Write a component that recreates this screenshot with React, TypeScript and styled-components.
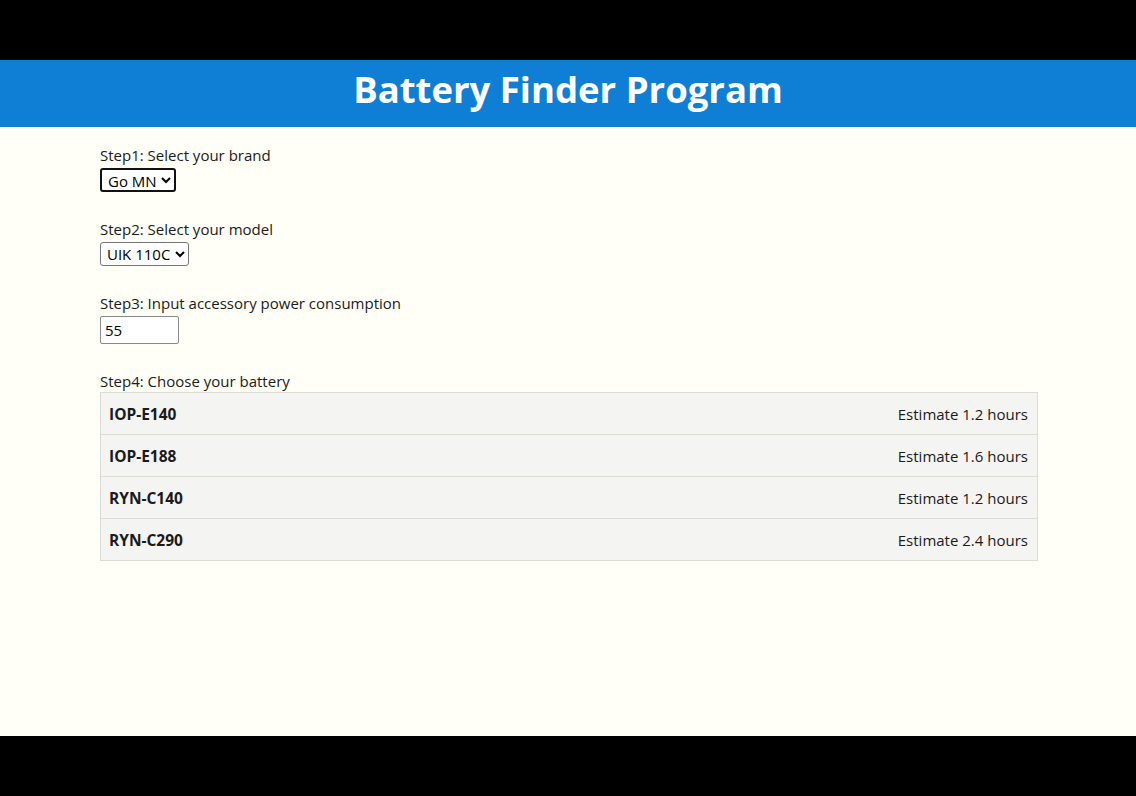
import React from "react";
import styled, { createGlobalStyle } from "styled-components";

const GlobalStyle = createGlobalStyle`
  body {
    margin: 0;
    background: #000;
    font-family: "Open Sans", "Noto Sans", sans-serif;
  }
`;

const Screen = styled.div`
  height: 796px;
  padding: 60px 0;
  box-sizing: border-box;
  background: #000;
`;

const Page = styled.div`
  height: 676px;
  background: #fffff7;
  color: #1a1a1a;
`;

const Header = styled.header`
  height: 67px;
  box-sizing: border-box;
  padding-bottom: 9px;
  background: #0f7fd6;
  display: flex;
  align-items: center;
  justify-content: center;
  color: #fff;
  font-size: 36.5px;
  font-weight: 700;
`;

const Main = styled.main`
  padding: 18px 98px 0 100px;
`;

const Step = styled.div`
  display: flex;
  flex-direction: column;
  align-items: flex-start;
  margin-bottom: 27px;
`;

const Label = styled.label<{ $tight?: boolean }>`
  display: block;
  font-size: 15px;
  line-height: 21px;
  margin-bottom: ${(p) => (p.$tight ? "0" : "2px")};
`;

const Select = styled.select<{ $focused?: boolean }>`
  height: 24px;
  font-family: inherit;
  font-size: 15px;
  color: #000;
  background: #fff;
  border-radius: 3px;
  padding: 0 1px 0 2px;
  border: ${(p) => (p.$focused ? "2px solid #111" : "1px solid #767676")};
`;

const NumberInput = styled.input`
  width: 79px;
  height: 28px;
  box-sizing: border-box;
  font-family: inherit;
  font-size: 15px;
  padding: 0 4px;
  border: 1px solid #8a8a8a;
  border-radius: 2px;
  background: #fff;
`;

const List = styled.div`
  border: 1px solid #dcdcd4;
  background: #f4f4f2;
`;

const Row = styled.div`
  display: flex;
  justify-content: space-between;
  align-items: center;
  height: 41px;
  padding: 0 9px 0 8px;
  font-size: 15px;
  & + & {
    border-top: 1px solid #dcdcd4;
  }
`;

const Name = styled.span`
  font-weight: 700;
  font-size: 15.5px;
`;

const batteries = [
  { name: "IOP-E140", hours: "1.2" },
  { name: "IOP-E188", hours: "1.6" },
  { name: "RYN-C140", hours: "1.2" },
  { name: "RYN-C290", hours: "2.4" },
];

export default function App() {
  return (
    <>
      <GlobalStyle />
      <Screen>
        <Page>
          <Header>Battery Finder Program</Header>
          <Main>
            <Step>
              <Label>Step1: Select your brand</Label>
              <Select $focused defaultValue="Go MN">
                <option>Go MN</option>
              </Select>
            </Step>
            <Step>
              <Label>Step2: Select your model</Label>
              <Select defaultValue="UIK 110C">
                <option>UIK 110C</option>
              </Select>
            </Step>
            <Step>
              <Label>Step3: Input accessory power consumption</Label>
              <NumberInput type="text" defaultValue="55" />
            </Step>
            <Label as="div" $tight>
              Step4: Choose your battery
            </Label>
            <List>
              {batteries.map((b) => (
                <Row key={b.name}>
                  <Name>{b.name}</Name>
                  <span>Estimate {b.hours} hours</span>
                </Row>
              ))}
            </List>
          </Main>
        </Page>
      </Screen>
    </>
  );
}
